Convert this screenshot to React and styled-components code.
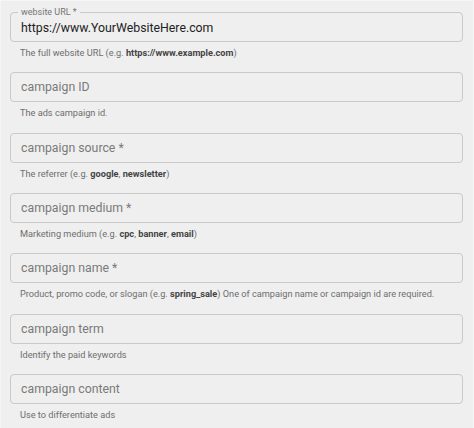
import React from "react";
import styled, { createGlobalStyle } from "styled-components";

const GlobalStyle = createGlobalStyle`
    html, body {
        margin: 0;
        padding: 0;
        background: #efefef;
    }
    body {
        font-family: Roboto, "Liberation Sans", Arial, sans-serif;
    }
`;

const Page = styled.div`
    box-sizing: border-box;
    width: 474px;
    height: 428px;
    padding: 11px 10px 0 9px;
    background: #efefef;
    border-top: 1px solid #f6f6f6;
    border-left: 1px solid #f6f6f6;
    border-right: 1px solid #f6f6f6;
    overflow: hidden;
`;

const Form = styled.div`
    display: flex;
    flex-direction: column;
    gap: 13.33px;
`;

const Field = styled.div`
    display: flex;
    flex-direction: column;
`;

const Box = styled.div`
    box-sizing: border-box;
    height: 30px;
    padding: 0 10px;
    border: 1px solid #c9c9c9;
    border-radius: 4px;
    display: flex;
    align-items: center;
    position: relative;
`;

const Legend = styled.span`
    position: absolute;
    top: -5px;
    left: 7px;
    padding: 0 3px;
    font-size: 9px;
    line-height: 9px;
    color: #757575;
    background: #efefef;
    white-space: nowrap;
`;

const Value = styled.span`
    font-size: 12.3px;
    color: ${(p) => (p.$filled ? "#222" : "#7a7a7a")};
    white-space: nowrap;
    padding-top: ${(p) => (p.$filled ? "1px" : "0")};
`;

const Helper = styled.div`
    margin: 5px 0 0 10px;
    font-size: 9.2px;
    line-height: 12px;
    color: #6e6e6e;
    white-space: nowrap;

    b {
        font-weight: 700;
        color: #444;
    }
`;

const fields = [
    {
        label: "website URL *",
        value: "https://www.YourWebsiteHere.com",
        help: <>The full website URL (e.g. <b>https://www.example.com</b>)</>,
    },
    { placeholder: "campaign ID", help: <>The ads campaign id.</> },
    {
        placeholder: "campaign source *",
        help: <>The referrer (e.g. <b>google</b>, <b>newsletter</b>)</>,
    },
    {
        placeholder: "campaign medium *",
        help: <>Marketing medium (e.g. <b>cpc</b>, <b>banner</b>, <b>email</b>)</>,
    },
    {
        placeholder: "campaign name *",
        help: (
            <>
                Product, promo code, or slogan (e.g. <b>spring_sale</b>) One of campaign name or
                campaign id are required.
            </>
        ),
    },
    { placeholder: "campaign term", help: <>Identify the paid keywords</> },
    { placeholder: "campaign content", help: <>Use to differentiate ads</> },
];

export default function App() {
    return (
        <Page>
            <GlobalStyle />
            <Form>
                {fields.map((f, i) => (
                    <Field key={i}>
                        <Box>
                            {f.label && <Legend>{f.label}</Legend>}
                            <Value $filled={!!f.value}>{f.value || f.placeholder}</Value>
                        </Box>
                        <Helper>{f.help}</Helper>
                    </Field>
                ))}
            </Form>
        </Page>
    );
}
